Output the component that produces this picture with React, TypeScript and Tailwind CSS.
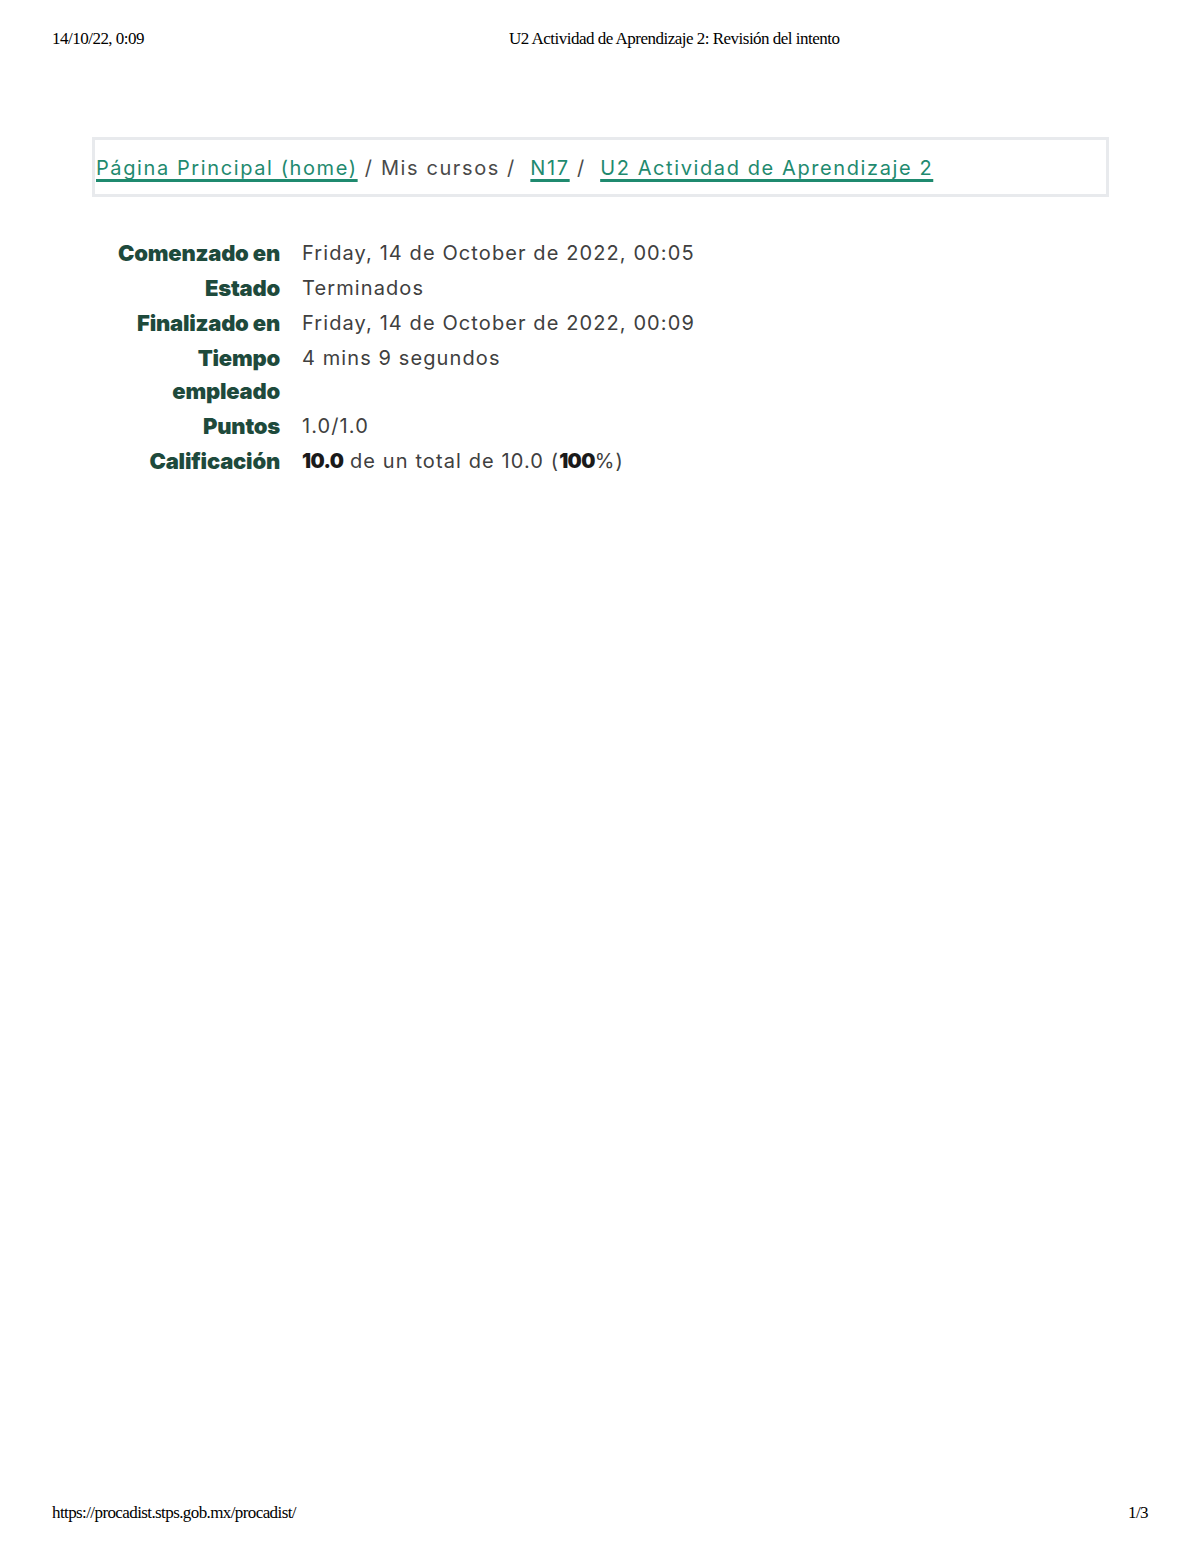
import React from "react";

const rows: { label: string; value: React.ReactNode }[] = [
  { label: "Comenzado en", value: "Friday, 14 de October de 2022, 00:05" },
  { label: "Estado", value: "Terminados" },
  { label: "Finalizado en", value: "Friday, 14 de October de 2022, 00:09" },
  { label: "Tiempo empleado", value: "4 mins 9 segundos" },
  { label: "Puntos", value: "1.0/1.0" },
  {
    label: "Calificación",
    value: (
      <>
        <b className="font-black text-[#1a1a1a] tracking-[-0.03em]">10.0</b> de un total de 10.0 (
        <b className="font-black text-[#1a1a1a] tracking-[-0.03em]">100</b>%)
      </>
    ),
  },
];

export default function App() {
  return (
    <div className="w-[1200px] h-[1553px] bg-white flex flex-col text-black">
      <header className="flex items-center h-[22px] mt-[28px] px-[52px] text-[17px] font-['Liberation_Serif',serif] tracking-[-0.03em]">
        <span className="w-[457px]">14/10/22, 0:09</span>
        <span>U2 Actividad de Aprendizaje 2: Revisión del intento</span>
      </header>

      <main className="flex-1 font-['Inter',sans-serif]">
        <nav className="ml-[92px] mt-[87px] w-[1017px] h-[60px] border-[3px] border-[#e8eaed] flex items-center pl-[1px] pt-[2px] text-[20px] text-[#4a4a4a] tracking-[0.08em]">
          <a className="text-[#1f8a6f] underline decoration-[3px] underline-offset-[4px]">Página Principal (home)</a>
          <span className="whitespace-pre"> / Mis cursos /  </span>
          <a className="text-[#1f8a6f] underline decoration-[3px] underline-offset-[4px]">N17</a>
          <span className="whitespace-pre"> /  </span>
          <a className="text-[#1f8a6f] underline decoration-[3px] underline-offset-[4px]">U2 Actividad de Aprendizaje 2</a>
        </nav>

        <div className="ml-[92px] mt-[39px] grid grid-cols-[188px_1fr] gap-x-[22px] leading-[33px]">
          {rows.map((r) => (
            <React.Fragment key={r.label}>
              <div className="py-[1px] text-right text-[22px] font-black text-[#1e4a3c] tracking-[-0.01em]">{r.label}</div>
              <div className="py-[1px] text-[20px] text-[#404040] tracking-[0.055em]">{r.value}</div>
            </React.Fragment>
          ))}
        </div>
      </main>

      <footer className="flex items-center justify-between h-[22px] mb-[29px] pl-[52px] pr-[52px] text-[17px] font-['Liberation_Serif',serif] tracking-[-0.035em]">
        <span>https://procadist.stps.gob.mx/procadist/</span>
        <span>1/3</span>
      </footer>
    </div>
  );
}
